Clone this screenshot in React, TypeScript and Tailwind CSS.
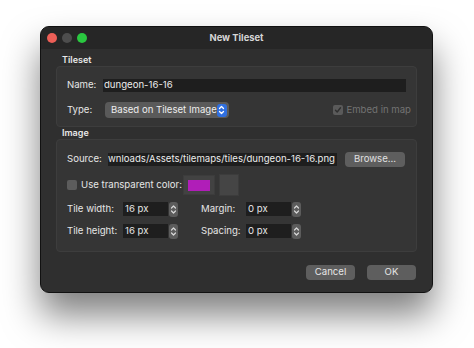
import type { ReactNode } from 'react';

const FONT = "font-['Inter','Liberation_Sans',sans-serif]";

function Spinner() {
  return (
    <div className="flex h-[15px] w-[9px] shrink-0 flex-col items-center justify-center rounded-[3px] bg-[#5c5c5c]">
      <svg width="7" height="11" viewBox="0 0 7 11" fill="none" stroke="#d8d8d8" strokeWidth="1.2" strokeLinecap="round" strokeLinejoin="round">
        <path d="M1.5 4 L3.5 2 L5.5 4" />
        <path d="M1.5 7 L3.5 9 L5.5 7" />
      </svg>
    </div>
  );
}

function NumberField({ value }: { value: string }) {
  return (
    <div className="flex shrink-0 items-center gap-[1px]">
      <div className="flex h-[14px] w-[45px] items-center bg-[#1e1e1e] pl-[2px] text-[#e6e6e6]">{value}</div>
      <Spinner />
    </div>
  );
}

function Group({ title, children, className }: { title: string; children: ReactNode; className: string }) {
  return (
    <div className="flex flex-col">
      <div className="h-[12px] pl-[6px] text-[9px] font-semibold leading-[12px] text-[#e8e8e8]">{title}</div>
      <div className={`rounded-[4px] border border-[#3d3d3d] bg-[#353535] ${className}`}>{children}</div>
    </div>
  );
}

export default function App() {
  return (
    <div className={`h-[348px] w-[474px] overflow-hidden whitespace-nowrap bg-white pl-[40px] pt-[26px] text-[9.6px] ${FONT}`}>
      <div className="flex h-[267px] w-[393px] flex-col overflow-hidden rounded-[9px] border border-[#111] bg-[#2f2f2f] shadow-[0_22px_36px_rgba(0,0,0,0.5)]">
        {/* title bar */}
        <div className="grid h-[22px] shrink-0 grid-cols-[1fr_auto_1fr] items-center bg-[#262626]">
          <div className="flex items-center gap-[5px] pl-[6px]">
            <span className="h-[10px] w-[10px] rounded-full bg-[#ed5f57]" />
            <span className="h-[10px] w-[10px] rounded-full bg-[#4d4d4d]" />
            <span className="h-[10px] w-[10px] rounded-full bg-[#2ac840]" />
          </div>
          <div className="text-[9.4px] font-bold text-[#d6d6d6]">New Tileset</div>
          <div />
        </div>

        <div className="flex flex-col px-[15px] pt-[5px]">
          <Group title="Tileset" className="h-[61px] px-[10px] pt-[11px]">
            <div className="flex h-[14px] items-center">
              <span className="w-[36px] shrink-0 text-[#e6e6e6]">Name:</span>
              <div className="flex h-[13px] flex-1 items-center bg-[#1e1e1e] pl-[1px] text-[#ececec]">dungeon-16-16</div>
            </div>
            <div className="mt-[10px] flex h-[16px] items-center">
              <span className="w-[38px] shrink-0 text-[#e6e6e6]">Type:</span>
              <div className="flex h-[16px] w-[124px] shrink-0 items-center justify-between rounded-[4px] bg-[#5a5a5a] pl-[6px] pr-[2px] text-[#ededed]">
                <span>Based on Tileset Image</span>
                <span className="flex h-[13px] w-[12px] items-center justify-center rounded-[3px] bg-[#2f6fe0]">
                  <svg width="7" height="10" viewBox="0 0 7 10" fill="none" stroke="white" strokeWidth="1.3" strokeLinecap="round" strokeLinejoin="round">
                    <path d="M1.5 3.5 L3.5 1.5 L5.5 3.5" />
                    <path d="M1.5 6.5 L3.5 8.5 L5.5 6.5" />
                  </svg>
                </span>
              </div>
              <div className="ml-auto mr-[-5px] flex items-center gap-[3px] text-[#737373]">
                <span className="flex h-[10px] w-[10px] items-center justify-center rounded-[2px] bg-[#5a5a5a]">
                  <svg width="8" height="8" viewBox="0 0 8 8" fill="none" stroke="#2f2f2f" strokeWidth="1.4" strokeLinecap="round" strokeLinejoin="round">
                    <path d="M1.5 4.2 L3.2 6 L6.5 1.8" />
                  </svg>
                </span>
                <span>Embed in map</span>
              </div>
            </div>
          </Group>

          <Group title="Image" className="h-[113px] pl-[10px] pr-[11px] pt-[11px]">
            <div className="flex h-[16px] items-center">
              <span className="w-[41px] shrink-0 text-[#e6e6e6]">Source:</span>
              <div className="flex h-[13px] w-[229px] shrink-0 items-center justify-end overflow-hidden bg-[#1e1e1e] pr-[2px] text-[#ececec]">
                ownloads/Assets/tilemaps/tiles/dungeon-16-16.png
              </div>
              <div className="ml-auto flex h-[15px] w-[60px] items-center justify-center rounded-[4px] bg-[#5e5e5e] text-[#e0e0e0]">Browse...</div>
            </div>

            <div className="mt-[7px] flex h-[22px] items-center">
              <span className="h-[10px] w-[10px] shrink-0 rounded-[2px] bg-[#5c5c5c]" />
              <span className="ml-[4px] w-[102px] shrink-0 text-[#e6e6e6]">Use transparent color:</span>
              <div className="flex h-[20px] w-[32px] shrink-0 items-center justify-center border border-[#3c3c3c] bg-[#424242]">
                <span className="h-[11px] w-[22px] bg-[#b01eb8]" />
              </div>
              <span className="ml-[4px] h-[22px] w-[20px] shrink-0 border border-[#3c3c3c] bg-[#454545]" />
            </div>

            <div className="mt-[5px] flex h-[16px] items-center">
              <span className="w-[56px] shrink-0 text-[#e6e6e6]">Tile width:</span>
              <NumberField value="16 px" />
              <span className="ml-[23px] w-[45px] shrink-0 text-[#e6e6e6]">Margin:</span>
              <NumberField value="0 px" />
            </div>

            <div className="mt-[6px] flex h-[16px] items-center">
              <span className="w-[56px] shrink-0 text-[#e6e6e6]">Tile height:</span>
              <NumberField value="16 px" />
              <span className="ml-[23px] w-[45px] shrink-0 text-[#e6e6e6]">Spacing:</span>
              <NumberField value="0 px" />
            </div>
          </Group>

          <div className="mt-[13px] flex justify-end gap-[12px] pr-[1px]">
            <div className="flex h-[15px] w-[49px] items-center justify-center rounded-[4px] bg-[#5e5e5e] text-[#e6e6e6]">Cancel</div>
            <div className="flex h-[15px] w-[49px] items-center justify-center rounded-[4px] bg-[#5e5e5e] text-[#e6e6e6]">OK</div>
          </div>
        </div>
      </div>
    </div>
  );
}
